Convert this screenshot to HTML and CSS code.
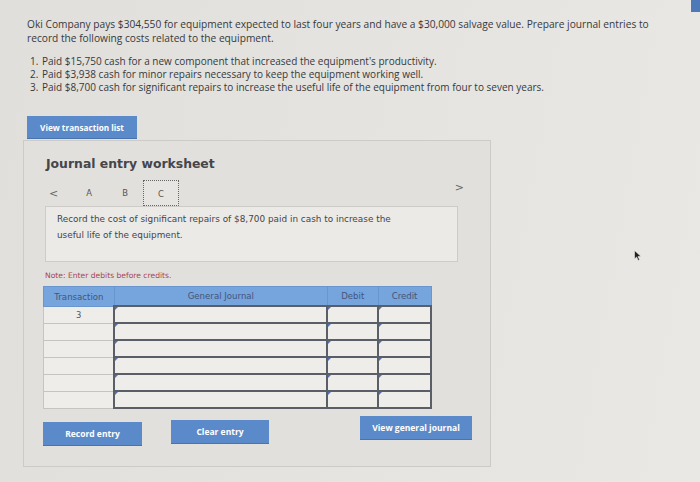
FILE: index.html
```html
<!DOCTYPE html>
<html lang="en">
<head>
<meta charset="utf-8">
<title>Journal entry worksheet</title>
<link rel="stylesheet" href="styles.css">
</head>
<body>
<main class="page">
  <span class="corner-tab"></span>
  <p class="intro">Oki Company pays $304,550 for equipment expected to last four years and have a $30,000 salvage value. Prepare journal entries to record the following costs related to the equipment.</p>
  <ol class="tasks">
    <li>Paid $15,750 cash for a new component that increased the equipment's productivity.</li>
    <li>Paid $3,938 cash for minor repairs necessary to keep the equipment working well.</li>
    <li>Paid $8,700 cash for significant repairs to increase the useful life of the equipment from four to seven years.</li>
  </ol>
  <button class="btn btn-list">View transaction list</button>

  <section class="worksheet">
    <h2 class="ws-title">Journal entry worksheet</h2>
    <nav class="tabs">
      <span class="arrow">&lt;</span>
      <span class="tab">A</span>
      <span class="tab">B</span>
      <span class="tab tab-active">C</span>
      <span class="arrow arrow-next">&gt;</span>
    </nav>
    <div class="desc">Record the cost of significant repairs of $8,700 paid in cash to increase the useful life of the equipment.</div>
    <p class="note">Note: Enter debits before credits.</p>
    <table class="journal">
      <thead>
        <tr><th class="c-tr">Transaction</th><th class="c-gj">General Journal</th><th class="c-dr">Debit</th><th class="c-cr">Credit</th></tr>
      </thead>
      <tbody>
        <tr><td class="tr">3</td><td class="in"></td><td class="in"></td><td class="in"></td></tr>
        <tr><td class="tr"></td><td class="in"></td><td class="in"></td><td class="in"></td></tr>
        <tr><td class="tr"></td><td class="in"></td><td class="in"></td><td class="in"></td></tr>
        <tr><td class="tr"></td><td class="in"></td><td class="in"></td><td class="in"></td></tr>
        <tr><td class="tr"></td><td class="in"></td><td class="in"></td><td class="in"></td></tr>
        <tr><td class="tr"></td><td class="in"></td><td class="in"></td><td class="in"></td></tr>
      </tbody>
    </table>
    <div class="actions">
      <button class="btn btn-record">Record entry</button>
      <button class="btn btn-clear">Clear entry</button>
      <button class="btn btn-view">View general journal</button>
    </div>
  </section>
  <svg class="cursor" width="8" height="11" viewBox="0 0 8 11"><path d="M0.5 0.5 L0.5 9 L2.6 7 L4.2 10.5 L5.6 9.8 L4 6.5 L7 6.4 Z" fill="#222" stroke="#eee" stroke-width="0.6"/></svg>
</main>
</body>
</html>
```

FILE: styles.css
```css
html, body {
  margin: 0;
  padding: 0;
}
body {
  width: 700px;
  height: 482px;
  overflow: hidden;
  background: linear-gradient(100deg, #e0dfdb 0%, #e4e3df 45%, #e9e8e4 100%);
  font-family: "Open Sans", "Liberation Sans", sans-serif;
  color: #38383b;
}
.page {
  position: relative;
  padding: 17px 0 0 27px;
  height: 482px;
  box-sizing: border-box;
}
.corner-tab {
  position: absolute;
  right: 0;
  top: 0;
  width: 9px;
  height: 12px;
  background: #4d79b8;
}
.intro {
  margin: 0;
  width: 640px;
  font-size: 10.2px;
  line-height: 14px;
}
.tasks {
  margin: 10px 0 0 0;
  padding-left: 14px;
  font-size: 10px;
  line-height: 12.8px;
}
.tasks li {
  padding-left: 1px;
}
.btn {
  display: block;
  border: 0;
  background: #5b8acb;
  color: #fff;
  font-family: "Open Sans", "Liberation Sans", sans-serif;
  font-weight: 700;
  font-size: 8.5px;
  padding: 0;
  height: 22px;
  box-shadow: 0 1px 0 #4a73ad;
}
.btn-list {
  margin-top: 23px;
  width: 110px;
  font-size: 8.2px;
}
.worksheet {
  margin: 2px 0 0 -4px;
  width: 468px;
  height: 327px;
  box-sizing: border-box;
  border: 1px solid #cccbc7;
  background: #e1e0dc;
  padding: 15px 0 0 21px;
}
.ws-title {
  margin: 0 0 0 1px;
  font-family: "DejaVu Sans", Verdana, sans-serif;
  font-weight: 700;
  font-size: 12.4px;
  color: #45454a;
  line-height: 16px;
}
.tabs {
  display: flex;
  align-items: center;
  height: 26px;
  margin-top: 8px;
  font-family: "DejaVu Sans", Verdana, sans-serif;
  font-size: 8.4px;
  color: #555;
}
.arrow {
  font-size: 11px;
  color: #666;
  margin-left: 4px;
  width: 22px;
}
.tab {
  width: 36px;
  text-align: center;
}
.tab-active {
  height: 26px;
  line-height: 26px;
  border: 1px dotted #666;
  box-sizing: border-box;
  background: #e6e5e1;
}
.arrow-next {
  margin-left: auto;
  margin-right: 26px;
  width: auto;
  position: relative;
  top: -6px;
}
.desc {
  margin-left: 0;
  width: 413px;
  height: 56px;
  box-sizing: border-box;
  border: 1px solid #cdccc8;
  background: #ebeae6;
  padding: 4px 50px 4px 11px;
  font-family: "DejaVu Sans", Verdana, sans-serif;
  font-size: 8.9px;
  line-height: 16px;
  color: #454545;
}
.note {
  margin: 8px 0 0 0;
  font-family: "DejaVu Sans", Verdana, sans-serif;
  font-size: 7.6px;
  color: #a8474f;
  line-height: 11px;
}
.journal {
  margin-top: 5px;
  margin-left: -2px;
  border-collapse: collapse;
  width: 389px;
  font-family: "DejaVu Sans", Verdana, sans-serif;
  font-size: 8.6px;
}
.journal th {
  background: #76a4dd;
  color: #44557a;
  font-weight: 400;
  height: 18px;
  padding: 0;
  border: 1px solid #6a96cf;
}
.c-tr { width: 70px; }
.c-gj { width: 213px; }
.c-dr { width: 50px; }
.c-cr { width: 52px; }
.journal td {
  height: 15px;
  padding: 0;
  background: #eeede9;
}
.journal td.tr {
  border: 1px solid #c4c4c2;
  text-align: center;
  color: #555;
  font-size: 8.4px;
}
.journal td.in {
  border: 2px solid #5a5e66;
  position: relative;
}
.journal td.in::before {
  content: "";
  position: absolute;
  left: 0;
  top: 0;
  border-top: 3px solid #4e73b8;
  border-right: 3px solid transparent;
}
.actions {
  display: flex;
  align-items: flex-start;
  margin-top: 11px;
  margin-left: -2px;
}
.btn-record {
  width: 99px;
  height: 23px;
  margin-top: 2px;
}
.btn-clear {
  width: 98px;
  height: 23px;
  margin-left: 29px;
}
.btn-view {
  width: 112px;
  height: 23px;
  margin-left: 91px;
  margin-top: -4px;
}
.cursor {
  position: absolute;
  left: 634px;
  top: 250px;
}
```
